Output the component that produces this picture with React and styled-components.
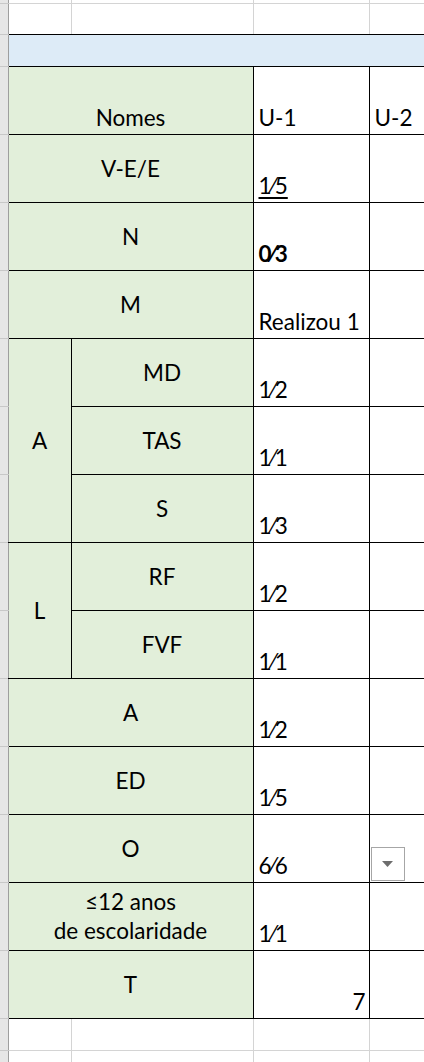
import React from 'react';
import styled, {createGlobalStyle} from 'styled-components';

const GlobalStyle = createGlobalStyle`
  html, body {
    margin: 0;
    padding: 0;
    background: #ffffff;
  }
  body {
    font-family: Lato, "Liberation Sans", sans-serif;
    color: #000000;
  }
`

const Viewport = styled.div`
  width: 424px;
  height: 1062px;
  overflow: hidden;
`

const Sheet = styled.table`
  border-collapse: collapse;
  table-layout: fixed;
  width: 480px;
  font-size: 22.5px;
  font-feature-settings: "frac" 0, "numr" 0, "dnom" 0;
`

const Row = styled.tr`
  height: ${props => props.$h}px;
`

const RowHead = styled.td`
  padding: 0;
  background: #e6e6e6;
  border-right: 1px solid #9e9e9e;
  border-bottom: 1px solid #c8c8c8;
`

const GridCell = styled.td`
  padding: 0;
  background: #ffffff;
  border-right: 1px solid #d4d4d4;
  border-bottom: 1px solid ${props => props.$dark ? '#000000' : '#d4d4d4'};
`

const Band = styled.td`
  padding: 0;
  background: #ddebf7;
  border-top: 1px solid #000000;
  border-bottom: 1px solid #000000;
`

const Label = styled.td`
  padding: 0 4px ${props => props.$bottom ? '2px' : '0'};
  background: #e2efda;
  border: 1px solid #000000;
  border-left: ${props => props.$lead ? 'none' : '1px solid #000000'};
  text-align: center;
  vertical-align: ${props => props.$bottom ? 'bottom' : 'middle'};
  line-height: 29px;
  white-space: nowrap;
`

const Value = styled.td`
  padding: 0 ${props => props.$right ? '3px' : '6px'} 2px 5px;
  background: #ffffff;
  border: 1px solid #000000;
  text-align: ${props => props.$right ? 'right' : 'left'};
  vertical-align: bottom;
  line-height: 29px;
  white-space: nowrap;
  font-weight: ${props => props.$bold ? 700 : 400};

  u {
    text-decoration-thickness: 2px;
    text-underline-offset: 3px;
  }
`

const DropCell = styled.td`
  padding: 0 0 1px 1px;
  background: #ffffff;
  border: 1px solid #000000;
  vertical-align: bottom;
`

const DropButton = styled.div`
  box-sizing: border-box;
  width: 34px;
  height: 34px;
  border: 1px solid #a6a6a6;
  background: #ffffff;
  display: flex;
  align-items: center;
  justify-content: center;

  svg {
    display: block;
  }
`

const grid = (dark) => (
    <>
        <GridCell $dark={dark}/>
        <GridCell $dark={dark}/>
        <GridCell $dark={dark}/>
        <GridCell $dark={dark}/>
    </>
)

const rows = [
    {label: 'V-E/E', value: <u>1⁄5</u>},
    {label: 'N', value: '0⁄3', bold: true},
    {label: 'M', value: 'Realizou 1'},
];

const tail = [
    {label: 'A', value: '1⁄2'},
    {label: 'ED', value: '1⁄5'},
];

const App = () => {
    return (
        <Viewport>
            <GlobalStyle/>
            <Sheet>
                <colgroup>
                    <col style={{width: 8}}/>
                    <col style={{width: 63}}/>
                    <col style={{width: 182}}/>
                    <col style={{width: 116}}/>
                    <col style={{width: 111}}/>
                </colgroup>
                <tbody>
                <Row $h={3}><RowHead/>{grid(false)}</Row>
                <Row $h={31}><RowHead/>{grid(true)}</Row>
                <Row $h={32}><RowHead/><Band colSpan={4}/></Row>
                <Row $h={68}>
                    <RowHead/>
                    <Label colSpan={2} $lead $bottom>Nomes</Label>
                    <Value>U-1</Value>
                    <Value>U-2</Value>
                </Row>
                {rows.map(r => (
                    <Row $h={68} key={r.label}>
                        <RowHead/>
                        <Label colSpan={2} $lead>{r.label}</Label>
                        <Value $bold={r.bold}>{r.value}</Value>
                        <Value/>
                    </Row>
                ))}
                <Row $h={68}>
                    <RowHead/>
                    <Label rowSpan={3} $lead>A</Label>
                    <Label>MD</Label>
                    <Value>1⁄2</Value>
                    <Value/>
                </Row>
                <Row $h={68}>
                    <RowHead/>
                    <Label>TAS</Label>
                    <Value>1⁄1</Value>
                    <Value/>
                </Row>
                <Row $h={68}>
                    <RowHead/>
                    <Label>S</Label>
                    <Value>1⁄3</Value>
                    <Value/>
                </Row>
                <Row $h={68}>
                    <RowHead/>
                    <Label rowSpan={2} $lead>L</Label>
                    <Label>RF</Label>
                    <Value>1⁄2</Value>
                    <Value/>
                </Row>
                <Row $h={68}>
                    <RowHead/>
                    <Label>FVF</Label>
                    <Value>1⁄1</Value>
                    <Value/>
                </Row>
                {tail.map(r => (
                    <Row $h={68} key={r.label}>
                        <RowHead/>
                        <Label colSpan={2} $lead>{r.label}</Label>
                        <Value>{r.value}</Value>
                        <Value/>
                    </Row>
                ))}
                <Row $h={68}>
                    <RowHead/>
                    <Label colSpan={2} $lead>O</Label>
                    <Value>6⁄6</Value>
                    <DropCell>
                        <DropButton>
                            <svg width="11" height="6" viewBox="0 0 11 6">
                                <path d="M0 0 L11 0 L5.5 6 Z" fill="#6d6d6d"/>
                            </svg>
                        </DropButton>
                    </DropCell>
                </Row>
                <Row $h={68}>
                    <RowHead/>
                    <Label colSpan={2} $lead>≤12 anos<br/>de escolaridade</Label>
                    <Value>1⁄1</Value>
                    <Value/>
                </Row>
                <Row $h={68}>
                    <RowHead/>
                    <Label colSpan={2} $lead>T</Label>
                    <Value $right>7</Value>
                    <Value/>
                </Row>
                <Row $h={32}><RowHead/>{grid(false)}</Row>
                <Row $h={32}><RowHead/>{grid(false)}</Row>
                </tbody>
            </Sheet>
        </Viewport>
    )
};

export default App;
